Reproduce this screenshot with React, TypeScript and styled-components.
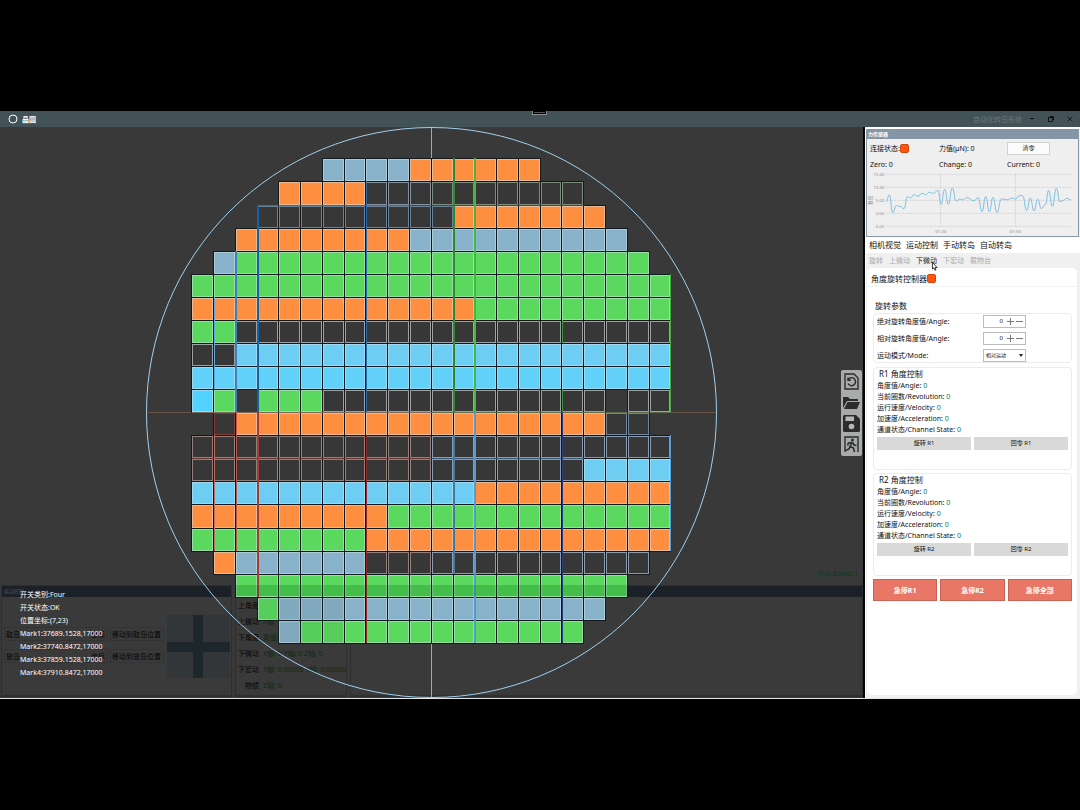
import React from "react";
import styled, { createGlobalStyle } from "styled-components";

const GlobalStyle = createGlobalStyle`
  *, *::before, *::after { box-sizing: border-box; }
  body {
    margin: 0;
    background: #000;
    color: #111;
    font-family: "Noto Sans", "Noto Sans CJK SC", sans-serif;
    font-size: 7px;
    line-height: 11px;
  }
  button, input, select { font: inherit; color: inherit; margin: 0; padding: 0; }
`;

/* ---------- window frame ---------- */

const Screen = styled.div`
  min-height: 100vh;
  display: flex;
  flex-direction: column;
  justify-content: center;
`;

const AppWindow = styled.main`
  position: relative;
  border-bottom: 1px solid #e4e4e4;
  background: #393939;
`;

const TitleBar = styled.header`
  height: 16px;
  display: flex;
  align-items: center;
  gap: 4px;
  padding: 0 5px 0 8px;
  background: #435256;
  color: #fff;
`;

const AppName = styled.h1`
  margin: 0;
  font-size: 7px;
  font-weight: 700;
`;

const SystemName = styled.span`
  margin-left: auto;
  color: #6b777b;
`;

const WindowButtons = styled.div`
  display: flex;
  gap: 9px;
  margin-left: 1px;
`;

const WindowButton = styled.button`
  display: grid;
  place-items: center;
  width: 10px;
  height: 10px;
  border: 0;
  background: none;
`;

const PullTab = styled.div`
  position: absolute;
  top: 0;
  left: 50%;
  width: 15px;
  height: 4px;
  margin-left: -8px;
  border: 1px solid #8a8f91;
  border-top: 0;
  background: #555;
  box-shadow: inset 0 0 0 1px #000;
`;

const Workspace = styled.div`
  display: grid;
  grid-template-columns: minmax(0, 1fr) 217px;
`;

/* ---------- wafer stage ---------- */

const Stage = styled.section`
  position: relative;
  min-width: 0;
`;

const WaferSvg = styled.svg`
  position: relative;
  display: block;
  width: 100%;
  height: auto;
  pointer-events: none;
`;

const Dock = styled.div`
  position: absolute;
  left: 1px;
  right: 0;
  bottom: 1px;
  display: flex;
  gap: 3px;
  height: 112px;
  color: #050505;
`;

const DockPanel = styled.section<{ $width?: number }>`
  flex: ${(p) => (p.$width ? `0 0 ${p.$width}px` : "1 1 0")};
  display: flex;
  flex-direction: column;
  border: 1px solid #2b3033;
  border-bottom-width: 2px;
  background: #3a3a3a;
`;

const DockTitle = styled.h2`
  margin: 0;
  height: 11px;
  padding-left: 2px;
  background: #1c2027;
  color: #3f464b;
  font-size: 5px;
  font-weight: 700;
`;

const StageMoves = styled.div`
  flex: 1;
  display: flex;
  align-items: center;
  gap: 3px;
  padding: 0 1px 0 2px;
`;

const MoveGrid = styled.div`
  flex: 1;
  display: grid;
  grid-template-columns: 1fr 54px;
  gap: 8px 2px;
  margin-top: -2px;
`;

const MoveButton = styled.button`
  display: flex;
  align-items: center;
  justify-content: space-between;
  height: 14px;
  border: 1px solid #333;
  border-radius: 2px;
  background: #3a3a3a;
  white-space: nowrap;
  padding: 0 2px 0 1px;
`;

const Axes = styled.dl`
  margin: 0;
  display: grid;
  grid-template-columns: 23px 1fr;
  column-gap: 4px;
  grid-auto-rows: 16px;
  padding-top: 1px;
  line-height: 16px;
  white-space: nowrap;
`;

const AxisName = styled.dt`
  text-align: right;
`;

const AxisValue = styled.dd`
  margin: 0;
  color: #0c2a14;
`;

const DieInfo = styled.ul`
  position: absolute;
  left: 20px;
  bottom: 19px;
  margin: 0;
  padding: 0;
  list-style: none;
  color: #fff;
  font-size: 7px;
  line-height: 13px;
`;

const ZoomInfo = styled.output`
  position: absolute;
  right: 5px;
  bottom: 119px;
  color: #083a1a;
`;

const ToolStrip = styled.nav`
  position: absolute;
  right: 1px;
  top: 243px;
  display: flex;
  flex-direction: column;
  gap: 2px;
  width: 21px;
  padding: 2px 1px;
  border-radius: 2px;
  background: #a9abab;
`;

const ToolButton = styled.button`
  display: grid;
  place-items: center;
  height: 19px;
  border: 0;
  background: none;
  color: #2c2c2c;
`;

/* ---------- right side ---------- */

const Side = styled.aside`
  display: flex;
  flex-direction: column;
  border-left: 2px solid #050505;
  padding-top: 2px;
  background: #f0f0f0;
  box-shadow: inset 0 2px #fff, inset 1px 0 #fff;
`;

const ForceBox = styled.section`
  margin: 0 1px;
  border: 1px solid #8798a6;
  border-top: 0;
  background: #efefef;
`;

const ForceTitle = styled.h2`
  margin: 0;
  height: 10px;
  padding-left: 1px;
  background: #8496a5;
  color: #fff;
  font-size: 5px;
  line-height: 10px;
  font-weight: 700;
`;

const ForceRow = styled.div<{ $height: number }>`
  display: grid;
  grid-template-columns: 69px 68px 1fr;
  align-items: center;
  height: ${(p) => p.$height}px;
  padding-left: 3px;
`;

const StatusText = styled.span`
  display: flex;
  align-items: center;
`;

const Lamp = styled.i`
  width: 9px;
  height: 9px;
  border: 1px solid #d8440c;
  border-radius: 2px;
  background: #ff5511;
`;

const ZeroButton = styled.button`
  width: 43px;
  height: 13px;
  border: 1px solid #d2d2d2;
  background: #fbfbfb;
  font-size: 6px;
`;

const Chart = styled.svg`
  display: block;
  width: 100%;
  height: auto;
`;

const MainTabs = styled.nav`
  display: flex;
  align-items: center;
  gap: 5px;
  height: 16px;
  padding-left: 4px;
  background: #fff;
`;

const MainTab = styled.button`
  border: 0;
  background: none;
  font-size: 8px;
  line-height: 12px;
`;

const SubTabs = styled.nav`
  display: flex;
  align-items: center;
  gap: 6px;
  height: 15px;
  padding-left: 4px;
`;

const SubTab = styled.button<{ $active?: boolean }>`
  position: relative;
  border: 0;
  background: none;
  color: ${(p) => (p.$active ? "#222" : "#a9a9a9")};
`;

const Pointer = styled.svg`
  position: absolute;
  left: 16px;
  top: 7px;
  width: 6px;
  height: 9px;
`;

const Card = styled.div`
  flex: 1;
  margin: 0 3px 3px 2px;
  padding: 0 5px 0 6px;
  border-radius: 5px;
  background: #fff;
`;

const ControllerTitle = styled.h2`
  display: flex;
  align-items: center;
  margin: 0 -5px 12px -6px;
  height: 19px;
  padding: 2px 0 0 4px;
  border-bottom: 1px solid #f4f4f4;
  font-size: 8px;
  font-weight: 400;
`;

const GroupTitle = styled.h3`
  margin: 0;
  padding-left: 2px;
  height: 14px;
  font-size: 8px;
  line-height: 13px;
  font-weight: 400;
`;

const Group = styled.section`
  margin-bottom: 3px;
  padding: 0 3px;
  border: 1px solid #ececec;
  border-radius: 4px;
`;

const ParamGroup = styled(Group)`
  display: flex;
  flex-direction: column;
  gap: 3px;
  margin-bottom: 4px;
`;

const Param = styled.div`
  display: grid;
  grid-template-columns: 106px 43px;
  align-items: center;
  height: 14px;
`;

const Stepper = styled.div`
  display: flex;
  align-items: center;
  height: 13px;
  padding-right: 1px;
  border: 1px solid #b9bdc2;
  background: #fff;
`;

const StepInput = styled.input`
  flex: 1;
  min-width: 0;
  height: 11px;
  border: 0;
  outline: 0;
  background: none;
  text-align: right;
  padding-right: 3px;
  font-size: 6px;
`;

const StepButton = styled.button`
  display: grid;
  place-items: center;
  width: 9px;
  height: 11px;
  border: 0;
  background: none;
`;

const SelectWrap = styled.div`
  position: relative;
  display: grid;
`;

const ModeSelect = styled.select`
  appearance: none;
  height: 13px;
  padding-left: 2px;
  border: 1px solid #b9bdc2;
  border-radius: 0;
  background: #fff;
  font-size: 5px;
`;

const Caret = styled.svg`
  position: absolute;
  right: 3px;
  top: 5px;
  width: 4px;
  height: 3px;
  pointer-events: none;
`;

const AxisTitle = styled.h3`
  margin: 0;
  padding-left: 2px;
  height: 12px;
  font-size: 8px;
  line-height: 12px;
  font-weight: 400;
`;

const Reading = styled.p`
  margin: 0;
`;

const ReadingValue = styled.span`
  color: #0b7a52;
`;

const ButtonRow = styled.div`
  display: flex;
  gap: 3px;
  margin: 2px 0 19px;
`;

const AxisButton = styled.button`
  flex: 1;
  height: 13px;
  border: 0;
  background: #d9d9d9;
  font-size: 6px;
`;

const StopRow = styled.div`
  display: flex;
  gap: 3px;
`;

const StopButton = styled.button`
  flex: 1;
  height: 22px;
  border: 1px solid #cc6253;
  background: #e87766;
  color: #fff;
  font-size: 7px;
  font-weight: 700;
`;

/* ---------- wafer data ---------- */

type Kind = "o" | "g" | "s" | "b" | "c" | "d" | "." | " ";

const FILL: Record<string, string> = {
  o: "#ff8f40",
  g: "#5ad95e",
  s: "#87b2c9",
  b: "#6ecdf2",
  c: "#61d1fa",
  d: "#52d2ff",
};

// Each row lists runs of dies, left to right: kind and count.
const ROWS: [Kind, number][][] = [
  [[" ", 6], ["s", 4], ["o", 6]],
  [[" ", 4], ["o", 4], [".", 10]],
  [[" ", 3], [".", 9], ["o", 7]],
  [[" ", 2], ["o", 8], ["s", 10]],
  [[" ", 1], ["s", 1], ["g", 19]],
  [["g", 22]],
  [["o", 13], ["g", 9]],
  [["g", 2], [".", 20]],
  [[".", 2], ["b", 20]],
  [["c", 22]],
  [["d", 1], ["g", 1], [" ", 1], ["g", 3], [".", 13], [" ", 1], [".", 2]],
  [[" ", 1], [".", 1], ["o", 17], [".", 2]],
  [[".", 22]],
  [[".", 18], ["b", 4]],
  [["b", 13], ["o", 9]],
  [["o", 9], ["g", 13]],
  [["g", 8], ["o", 14]],
  [[" ", 1], ["o", 1], ["s", 6], [".", 13]],
  [[" ", 2], ["g", 18]],
  [[" ", 3], ["g", 1], ["s", 15]],
  [[" ", 4], ["s", 1], ["g", 13]],
];

const colX = (c: number) => Math.round(192.2 + c * 21.78);
const rowY = (r: number) => Math.round(158.4 + r * 23.07);

// Tinted scribe lines: column, first row, last row (exclusive), colour, thickness.
const COL_LINES: [number, number, number, string, number][] = [
  [1, 6, 10, "#5fa8e0", 1], [2, 4, 11, "#3f7fb8", 2], [3, 2, 11, "#1463a6", 2], [8, 1, 11, "#2a6cb0", 1],
  [12, 0, 11, "#2f8a2d", 2], [13, 0, 11, "#45b841", 2], [17, 7, 8, "#3c9a3a", 1], [17, 10, 11, "#3c9a3a", 1], [22, 5, 11, "#3fae3c", 1],
  [1, 12, 17, "#c06a60", 1], [2, 11, 17, "#b85a50", 1], [3, 11, 19, "#a83a32", 2], [8, 12, 21, "#962622", 1],
  [12, 12, 18, "#44799f", 2], [13, 11, 21, "#5599d0", 2], [17, 11, 21, "#2a3c80", 1], [22, 12, 17, "#4f9fdc", 1],
];

// Tinted lines between rows: row, first column, last column (exclusive), colour.
const ROW_LINES: [number, number, number, string][] = [
  [2, 3, 10, "#44688c"], [2, 10, 18, "#2c5a2b"],
  [11, 0, 11, "#7d6a5c"], [11, 11, 22, "#5d6a4a"],
  [13, 0, 11, "#6e3630"], [13, 11, 18, "#36597c"],
];

const outlineTone = (r: number, c: number) => {
  if (r === 1) return c < 11 ? "#87929c" : "#7c8c7c";
  if (r === 2) return "#6a8298";
  if (r < 11) return "#9da1a3";
  if (r === 11) return c < 11 ? "#843c36" : "#72879c";
  return c < 11 ? "#92807d" : "#8a9cad";
};

const Wafer = () => (
  <WaferSvg viewBox="0 127 863 571" role="img" aria-label="晶圆图">
    <path d="M431.5 127V698" stroke="#a5a5a5" shapeRendering="crispEdges" />
    <path d="M147 412.5H717" stroke="#6b5548" shapeRendering="crispEdges" />
    <g shapeRendering="crispEdges">
      {ROWS.map((runs, r) => {
        let c = 0;
        return runs.flatMap(([kind, count]) =>
          Array.from({ length: count }, () => {
            const x = colX(c);
            const y = rowY(r);
            const w = colX(c + 1) - x;
            const h = rowY(r + 1) - y;
            const key = `${r}-${c}`;
            const tone = outlineTone(r, c);
            // Dies above the docked panels let a little of them show through.
            const opacity = r > 18 && c < 7 ? 0.93 : 1;
            c += 1;
            if (kind === " ") return null;
            if (kind === ".")
              return (
                <g key={key}>
                  <rect x={x - 1} y={y} width={w + 1} height={h + 1} fill="#171717" />
                  <rect x={x + 0.5} y={y + 1.5} width={w - 2} height={h - 2} fill="#373737" stroke={tone} />
                </g>
              );
            return (
              <g key={key} opacity={opacity}>
                <path d={`M${x - 0.5} ${y + 0.5}h${w}v${h}h${-w}z`} fill="none" stroke="#10191f" />
                <rect x={x} y={y + 1} width={w - 1} height={h - 1} fill={FILL[kind]} />
                <rect x={x + 0.5} y={y + 1.5} width={w - 2} height={h - 2} fill="none" stroke="#d4e6ea" strokeOpacity={0.5} />
              </g>
            );
          })
        );
      })}
      {ROW_LINES.map(([r, a, b, color]) => (
        <path key={`r${r}-${a}`} d={`M${colX(a)} ${rowY(r) + 0.5}H${colX(b)}`} stroke={color} />
      ))}
      {COL_LINES.map(([c, a, b, color, thick]) => (
        <rect
          key={`c${c}-${a}`}
          x={colX(c) - (thick === 2 || c === 22 ? 1 : 0)}
          y={rowY(a)}
          width={thick}
          height={rowY(b) - rowY(a)}
          fill={color}
        />
      ))}
      <rect x={236} y={585} width={391} height={11} fill="#00640f" fillOpacity={0.24} />
    </g>
    <circle cx="431.5" cy="412.5" r="285" fill="none" stroke="#9fd0ee" />
  </WaferSvg>
);

/* ---------- force chart ---------- */

const WAVE: [number, number][] = [
  [78, 275], [88, 255], [98, 308], [109, 287], [120, 289], [132, 296], [142, 260], [152, 263], [163, 254],
  [174, 259], [186, 250], [197, 254], [208, 247], [220, 250], [234, 241], [243, 283], [254, 238], [265, 283],
  [277, 234], [288, 273], [300, 267], [308, 270], [320, 263], [342, 272], [354, 263], [366, 305], [377, 259],
  [388, 305], [399, 262], [411, 308], [424, 267], [442, 269], [456, 264], [466, 267], [480, 256], [488, 258],
  [500, 302], [511, 264], [522, 303], [533, 268], [544, 296], [556, 284], [566, 241], [577, 289], [589, 235],
  [600, 275], [608, 272], [620, 265], [632, 269],
];

const wavePath = WAVE.map(([x, y], i) => {
  if (i === 0) return `M${x} ${y}`;
  const [px, py] = WAVE[i - 1];
  const mid = (px + x) / 2;
  return `C${mid} ${py} ${mid} ${y} ${x} ${y}`;
}).join("");

const TICKS: [string, number][] = [["15.00", 193], ["10.00", 232], ["5.00", 271], ["0.00", 310], ["-5.00", 349]];

const ForceChart = () => (
  <Chart viewBox="21 183 633 195" role="img" aria-label="力值曲线">
    <g stroke="#d2d2d2" strokeWidth="3" strokeDasharray="5 3">
      {TICKS.map(([label, y]) => (
        <path key={label} d={`M78 ${y}H634`} />
      ))}
      <path d="M242 193V349M466 193V349" />
    </g>
    <g fontSize="13" fill="#8c8c8c">
      {TICKS.map(([label, y]) => (
        <text key={label} x="73" y={y + 5} textAnchor="end">{label}</text>
      ))}
      <text x="242" y="368" textAnchor="middle">01:20</text>
      <text x="466" y="368" textAnchor="middle">01:50</text>
      <text x="0" y="0" textAnchor="middle" transform="translate(37 271) rotate(-90)">数值</text>
    </g>
    <path d={wavePath} fill="none" stroke="#7fc0e2" strokeWidth="3" />
  </Chart>
);

/* ---------- icons ---------- */

const ReloadIcon = () => (
  <svg width="15" height="17" viewBox="0 0 15 17" fill="none" stroke="currentColor" strokeWidth="1.4">
    <path d="M1 1h9l4 4v11H1z" />
    <path d="M4.2 6.5A4 4 0 1 1 4 10.5M4 4.6v2.6h2.8" />
  </svg>
);

const FolderIcon = () => (
  <svg width="17" height="14" viewBox="0 0 17 14" fill="currentColor">
    <path d="M0 12V1h5l2 2h8v2H4z" />
    <path d="M4.500 6H17l-3 7H1z" />
  </svg>
);

const SaveIcon = () => (
  <svg width="17" height="17" viewBox="0 0 17 17">
    <path d="M1 0h12l4 4v12l-1 1H1l-1-1V1z" fill="currentColor" />
    <path d="M2.500 1.500h8.500v4.500H2.500z" fill="#b5b7b7" />
    <circle cx="8.500" cy="11.500" r="2.800" fill="#b5b7b7" />
  </svg>
);

const ExitIcon = () => (
  <svg width="15" height="17" viewBox="0 0 15 17" fill="none" stroke="currentColor">
    <path d="M1 16V1h13v15" strokeWidth="1.4" />
    <circle cx="8.500" cy="4" r="1.500" fill="currentColor" stroke="none" />
    <path d="M8 6L6 10.500L9.500 12L10.500 16M6 10.500L5 13L1.500 14.500M8 6.500L4.500 7L3.500 9.500M8.500 6.500L10 9l2.500.5" strokeWidth="1.600" />
  </svg>
);

const CrossPad = () => (
  <svg width="63" height="63" viewBox="0 0 63 63" shapeRendering="crispEdges">
    <path d="M0 0h63v63H0z" fill="#333638" />
    <path d="M26 0h10v27h27v10H36v26H26V37H0V27h26z" fill="#1d262b" />
  </svg>
);

const AXES = [
  ["上角度", "角度: 0 圆数: 0"],
  ["上微动", "X轴: 0 Y轴: 0 Z轴: 0"],
  ["下角度", "角度: 0 圆数: 0"],
  ["下微动", "X轴: 0 Y轴: 0 Z轴: 0"],
  ["下宏动", "X轴: 0.00000 Y轴: 0.00000"],
  ["物镜", "Z轴: 0"],
];

const DIE_INFO = [
  "开关类别:Four",
  "开关状态:OK",
  "位置坐标:(7,23)",
  "Mark1:37689.1528,17000",
  "Mark2:37740.8472,17000",
  "Mark3:37859.1528,17000",
  "Mark4:37910.8472,17000",
];

const READINGS = ["角度值/Angle:", "当前圈数/Revolution:", "运行速度/Velocity:", "加速度/Acceleration:", "通道状态/Channel State:"];

const StepField = ({ id, label }: { id: string; label: string }) => (
  <Param>
    <label htmlFor={id}>{label}</label>
    <Stepper>
      <StepInput id={id} defaultValue="0" />
      <StepButton aria-label="增加">
        <svg width="7" height="7" viewBox="0 0 7 7" stroke="#777"><path d="M0 3.500h7M3.500 0v7" /></svg>
      </StepButton>
      <StepButton aria-label="减少">
        <svg width="7" height="7" viewBox="0 0 7 7" stroke="#777"><path d="M0 3.500h7" /></svg>
      </StepButton>
    </Stepper>
  </Param>
);

const AxisControl = ({ name }: { name: string }) => (
  <Group>
    <AxisTitle>{name} 角度控制</AxisTitle>
    {READINGS.map((label) => (
      <Reading key={label}>
        {label} <ReadingValue>0</ReadingValue>
      </Reading>
    ))}
    <ButtonRow>
      <AxisButton>旋转 {name}</AxisButton>
      <AxisButton>回零 {name}</AxisButton>
    </ButtonRow>
  </Group>
);

export default function App() {
  return (
    <Screen>
      <GlobalStyle />
      <AppWindow>
        <TitleBar>
          <svg width="10" height="10" viewBox="0 0 10 10" fill="none" stroke="#fff"><circle cx="5" cy="5" r="4" /></svg>
          <AppName>晶圆</AppName>
          <SystemName>自动化转岛系统</SystemName>
          <WindowButtons>
            <WindowButton aria-label="最小化">
              <svg width="6" height="6" viewBox="0 0 6 6" stroke="#111"><path d="M1 2.500h4" /></svg>
            </WindowButton>
            <WindowButton aria-label="还原">
              <svg width="6" height="6" viewBox="0 0 6 6" fill="none" stroke="#111"><path d="M.5 1.500h4v4h-4zM2 .5h3.500V4" /></svg>
            </WindowButton>
            <WindowButton aria-label="关闭">
              <svg width="6" height="6" viewBox="0 0 6 6" stroke="#111" strokeWidth=".8"><path d="M.5.5l5 5M5.500.5l-5 5" /></svg>
            </WindowButton>
          </WindowButtons>
        </TitleBar>
        <PullTab />
        <Workspace>
          <Stage>
            <Dock>
              <DockPanel $width={231}>
                <DockTitle>运动控制</DockTitle>
                <StageMoves>
                  <MoveGrid>
                    <MoveButton>取岛<span>坐标</span></MoveButton>
                    <MoveButton>移动到取岛位置</MoveButton>
                    <MoveButton>放岛<span>坐标</span></MoveButton>
                    <MoveButton>移动到放岛位置</MoveButton>
                  </MoveGrid>
                  <CrossPad />
                </StageMoves>
              </DockPanel>
              <DockPanel $width={112}>
                <DockTitle>运动数据</DockTitle>
                <Axes>
                  {AXES.map(([name, value]) => (
                    <React.Fragment key={name}>
                      <AxisName>{name}</AxisName>
                      <AxisValue>{value}</AxisValue>
                    </React.Fragment>
                  ))}
                </Axes>
              </DockPanel>
              <DockPanel>
                <DockTitle>信息提示</DockTitle>
              </DockPanel>
            </Dock>
            <Wafer />
            <DieInfo>
              {DIE_INFO.map((line) => (
                <li key={line}>{line}</li>
              ))}
            </DieInfo>
            <ZoomInfo>(0,0) Zoom:1</ZoomInfo>
            <ToolStrip>
              <ToolButton aria-label="刷新"><ReloadIcon /></ToolButton>
              <ToolButton aria-label="打开"><FolderIcon /></ToolButton>
              <ToolButton aria-label="保存"><SaveIcon /></ToolButton>
              <ToolButton aria-label="退出"><ExitIcon /></ToolButton>
            </ToolStrip>
          </Stage>
          <Side>
            <ForceBox>
              <ForceTitle>力传感器</ForceTitle>
              <ForceRow $height={18}>
                <StatusText>连接状态:<Lamp /></StatusText>
                <span>力值(μN): 0</span>
                <ZeroButton>清零</ZeroButton>
              </ForceRow>
              <ForceRow $height={14}>
                <span>Zero: 0</span>
                <span>Change: 0</span>
                <span>Current: 0</span>
              </ForceRow>
              <ForceChart />
            </ForceBox>
            <MainTabs>
              <MainTab>相机视觉</MainTab>
              <MainTab>运动控制</MainTab>
              <MainTab>手动转岛</MainTab>
              <MainTab>自动转岛</MainTab>
            </MainTabs>
            <SubTabs>
              <SubTab>旋转</SubTab>
              <SubTab>上微动</SubTab>
              <SubTab $active>
                下微动
                <Pointer viewBox="0 0 6 9"><path d="M.5.5v6.500l1.500-1.200L3 8.300l1-.5-.9-2.300h2z" fill="#fff" stroke="#111" strokeWidth=".8" /></Pointer>
              </SubTab>
              <SubTab>下宏动</SubTab>
              <SubTab>载物台</SubTab>
            </SubTabs>
            <Card>
              <ControllerTitle>角度旋转控制器<Lamp /></ControllerTitle>
              <GroupTitle>旋转参数</GroupTitle>
              <ParamGroup>
                <StepField id="abs-angle" label="绝对旋转角度值/Angle:" />
                <StepField id="rel-angle" label="相对旋转角度值/Angle:" />
                <Param>
                  <label htmlFor="mode">运动模式/Mode:</label>
                  <SelectWrap>
                    <ModeSelect id="mode" defaultValue="rel">
                      <option value="rel">相对运动</option>
                      <option value="abs">绝对运动</option>
                    </ModeSelect>
                    <Caret viewBox="0 0 4 3"><path d="M0 0h4L2 3z" fill="#222" /></Caret>
                  </SelectWrap>
                </Param>
              </ParamGroup>
              <AxisControl name="R1" />
              <AxisControl name="R2" />
              <StopRow>
                <StopButton>急停R1</StopButton>
                <StopButton>急停R2</StopButton>
                <StopButton>急停全部</StopButton>
              </StopRow>
            </Card>
          </Side>
        </Workspace>
      </AppWindow>
    </Screen>
  );
}
